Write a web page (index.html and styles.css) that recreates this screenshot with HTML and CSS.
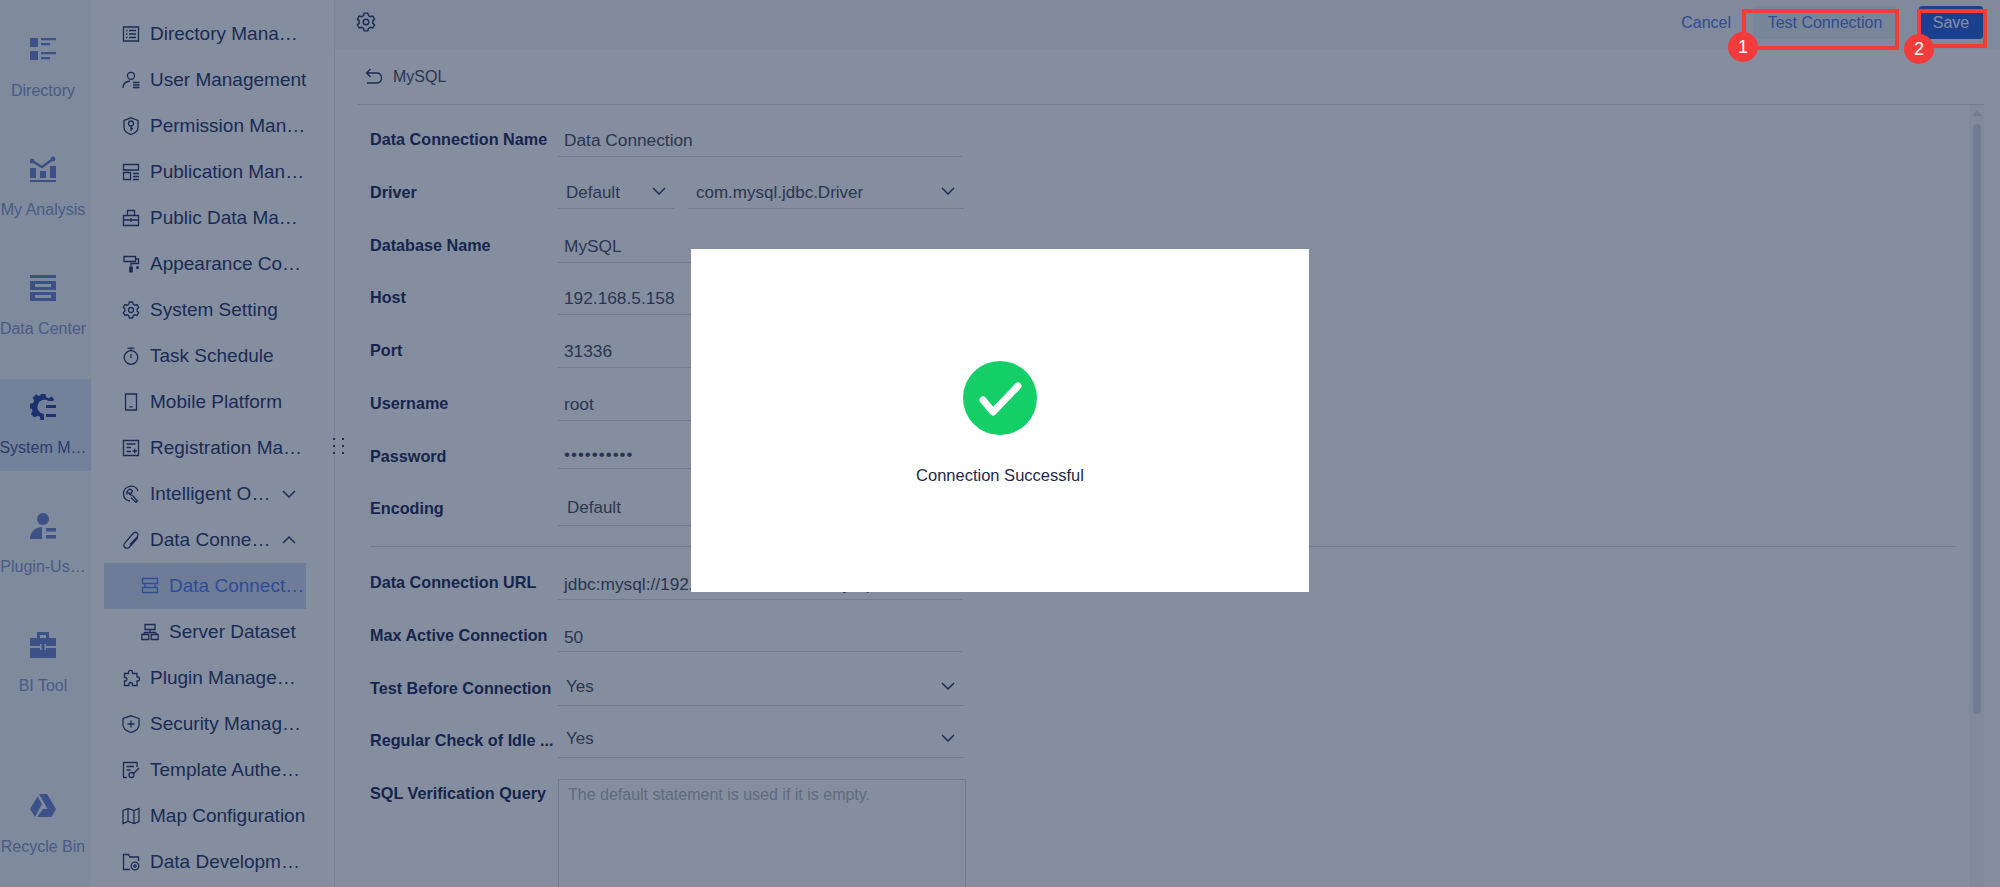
FILE: index.html
```html
<!DOCTYPE html>
<html lang="en">
<head>
<meta charset="utf-8">
<title>Data Connection</title>
<link rel="stylesheet" href="styles.css">
</head>
<body>
<div class="app">

  <nav class="rail">
    <a class="rail-item">
      <svg viewBox="0 0 26 26"><path d="M0 1h8v9H0zM0 14h8v9H0zM11 1h15v2.2H11zM11 6h9v2.2h-9zM11 15h15v2.2H11zM11 20h9v2.2h-9z"/></svg>
      <span>Directory</span>
    </a>
    <a class="rail-item">
      <svg viewBox="0 0 26 26"><path d="M0 12h6v10H0zM10 15h6v7h-6zM20 10h6v12h-6zM0 24h26v2H0z"/><path class="trend" d="M2 5l10 6 11-8"/><circle cx="2" cy="5" r="2.4"/><circle cx="23" cy="3" r="2.4"/></svg>
      <span>My Analysis</span>
    </a>
    <a class="rail-item">
      <svg viewBox="0 0 26 26"><path d="M0 0h26v3H0z"/><path fill-rule="evenodd" d="M0 6h26v9H0zM5 9v3h16V9zM0 17h26v9H0zM5 20v3h16v-3z"/></svg>
      <span>Data Center</span>
    </a>
    <a class="rail-item active">
      <svg viewBox="0 0 26 26"><path fill-rule="evenodd" d="M10.5 0h5l.7 3.2 2.6 1.1 2.8-1.7 2.6 2.9-1.2 1.6h-4.2A7.2 7.2 0 1 0 14 20.1V26h-3.5l-.7-3.2-2.6-1.1-2.8 1.7-3.500-3.500 1.700-2.800-1.100-2.600L0 14.800v-5l3.200-.7 1.100-2.600-1.700-2.800 3.500-3.500 2.800 1.700 1.900-.8z"/><path d="M16 11h10v3H16zM16 20h10v3H16z"/></svg>
      <span>System M…</span>
    </a>
    <a class="rail-item">
      <svg viewBox="0 0 26 26"><circle cx="13" cy="6" r="6"/><path d="M0 26c0-7 5-12 12-12v12zM16 15h10v3.500H16zM16 22h10v3.500H16z"/></svg>
      <span>Plugin-Us…</span>
    </a>
    <a class="rail-item">
      <svg viewBox="0 0 26 26"><path fill-rule="evenodd" d="M7 0h12v6h7v8h-10v-2h-6v2H0V6h7zM10 3v3h6V3zM0 16h10v2h6v-2h10v10H0z"/><path d="M11.500 12h3v6h-3z"/></svg>
      <span>BI Tool</span>
    </a>
    <a class="rail-item bottom">
      <svg viewBox="0 0 26 26"><path d="M9 0h8l9 15h-8.500zM7.500 2.500l4.500 7.500L5 23 0 15zM13 15h13l-4.500 8H7z"/></svg>
      <span>Recycle Bin</span>
    </a>
  </nav>

  <aside class="sidebar">
    <a class="nav-item">
      <svg viewBox="0 0 18 18"><path d="M1.500 2h15v14h-15zM4 5.500h1.500M7 5.500h7M4 9h1.500M7 9h7M4 12.500h1.500M7 12.500h7"/></svg>
      Directory Mana…
    </a>
    <a class="nav-item">
      <svg viewBox="0 0 18 18"><circle cx="9" cy="4.800" r="3.500"/><path d="M1 17c0-3.500 2.500-6.500 7-7M11 11.500h6.500M11 14h6.500M11 16.500h6.500"/></svg>
      User Management
    </a>
    <a class="nav-item">
      <svg viewBox="0 0 18 18"><path d="M9 .8l7 2.700v7c0 3.200-3 5.700-7 7-4-1.300-7-3.800-7-7v-7z"/><circle cx="9" cy="6.500" r="2.500"/><path d="M9 9v5M9 11.500h2"/></svg>
      Permission Man…
    </a>
    <a class="nav-item">
      <svg viewBox="0 0 18 18"><path d="M1.500 1.500h15V7h-15zM1.500 9.500h7v7h-7zM11 10.500h6M11 13.500h6M11 16.500h6"/></svg>
      Publication Man…
    </a>
    <a class="nav-item">
      <svg viewBox="0 0 18 18"><path d="M1.500 6.500h15v10h-15zM5.500 6.500v-5h7v5M1.500 11h15M9 9v4"/></svg>
      Public Data Ma…
    </a>
    <a class="nav-item">
      <svg viewBox="0 0 18 18"><path d="M2 1.500h11.500v5H2zM13.500 4h3v4.500H9v3"/><path class="solid" d="M7.200 11.500h3.600v6H7.200z"/><circle class="solid" cx="15.500" cy="12.500" r="1.500"/></svg>
      Appearance Co…
    </a>
    <a class="nav-item">
      <svg viewBox="0 0 18 18"><path d="M7.400 1h3.200l.6 2.200 1.700 1 2.200-.6 1.600 2.800-1.600 1.600v2l1.600 1.600-1.600 2.800-2.200-.6-1.700 1-.6 2.200H7.400l-.6-2.200-1.700-1-2.200.6-1.600-2.800L2.900 10V8L1.300 6.400l1.600-2.800 2.200.6 1.700-1z"/><circle cx="9" cy="9" r="2.500"/></svg>
      System Setting
    </a>
    <a class="nav-item">
      <svg viewBox="0 0 18 18"><circle cx="9" cy="10.500" r="6.800"/><path d="M5.500 1.200h7M9 1.200v2.500M9 7v4"/></svg>
      Task Schedule
    </a>
    <a class="nav-item">
      <svg viewBox="0 0 18 18"><path d="M3.500 1h11v16h-11zM7.500 13.800h3"/></svg>
      Mobile Platform
    </a>
    <a class="nav-item">
      <svg viewBox="0 0 18 18"><path d="M1.500 1.500h15v15h-15zM4.500 5h9M4.500 8.500h4.500M4.500 12.500h4.500M10.500 12h4.500M12.700 9.800v4.500"/></svg>
      Registration Ma…
    </a>
    <a class="nav-item has-arrow">
      <svg viewBox="0 0 18 18"><path d="M16 6A7.500 7.500 0 0 0 1.500 8.500C1.500 12.500 4 15.500 8 16"/><path d="M5 9.500a5 5 0 0 1 3-5.500l2.500 2-1.500 2.500-2.500-.5 1.500 1.500 2.500 1 5 5.500-1.500 1.500-5-5"/></svg>
      Intelligent O…
      <svg class="arrow" viewBox="0 0 14 14"><path d="M1 4l6 6 6-6"/></svg>
    </a>
    <a class="nav-item has-arrow">
      <svg viewBox="0 0 18 18"><path d="M16 6.500L7.500 16c-1.200 1.300-3.500 1.700-4.700.5-1.200-1.200-1-3.300.2-4.700L11 2.500c1.200-1.300 3-1.500 4.200-.5 1.200 1 1 2.800 0 4L8 13.500"/></svg>
      Data Conne…
      <svg class="arrow" viewBox="0 0 14 14"><path d="M1 10l6-6 6 6"/></svg>
    </a>
    <a class="nav-item sub current">
      <svg viewBox="0 0 18 18"><path d="M1.500 1.500h15v5h-15zM4 6.500v4M1.500 10.500h15v5h-15zM14 6.500v4" /></svg>
      Data Connect…
    </a>
    <a class="nav-item sub">
      <svg viewBox="0 0 18 18"><path d="M4 1.500h10v5H4zM9 6.500v3M3 9.500h12M3 9.500v2M15 9.500v2M.8 11.500h7v5h-7zM10.200 11.500h7v5h-7z"/></svg>
      Server Dataset
    </a>
    <a class="nav-item">
      <svg viewBox="0 0 18 18"><path d="M6.500 3C6.500.8 10.500.8 10.500 3v1.500H15V8h1c2 0 2 4 0 4h-1v4.500h-4.500V15c0-2-3.500-2-3.500 0v1.500H2.500V12H3.500c2 0 2-3.500 0-3.500h-1V4.500h4z"/></svg>
      Plugin Manage…
    </a>
    <a class="nav-item">
      <svg viewBox="0 0 18 18"><path d="M9 .8l8 2.700v6.500c0 3.500-3.500 6-8 7.500-4.500-1.500-8-4-8-7.500V3.500zM9 5.500v7M5.500 9h7"/></svg>
      Security Manag…
    </a>
    <a class="nav-item">
      <svg viewBox="0 0 18 18"><path d="M15 6V1.500H1.500v15H5M4.500 5.500h7.500M4.500 9h4"/><circle cx="9.500" cy="14" r="2.500"/><path d="M11.500 12.500L17 7"/></svg>
      Template Authe…
    </a>
    <a class="nav-item">
      <svg viewBox="0 0 18 18"><path d="M1 3.500L6 1.500l6 2 5-2v13l-5 2-6-2-5 2zM6 1.500v13M12 3.500v13"/></svg>
      Map Configuration
    </a>
    <a class="nav-item">
      <svg viewBox="0 0 18 18"><path d="M8 16.500H1.500V1.500h5l1.500 2.500h8.500v4"/><circle cx="13" cy="13" r="3.800"/><circle cx="13" cy="13" r="1.200"/></svg>
      Data Developm…
    </a>
    <svg class="drag-dots" viewBox="0 0 12 18"><path d="M0 0h2v2H0zM0 7h2v2H0zM0 14h2v2H0zM9 0h2v2H9zM9 7h2v2H9zM9 14h2v2H9z"/></svg>
  </aside>

  <main class="main">
    <header class="topbar">
      <svg class="gear" viewBox="0 0 18 18"><path d="M7.400 1h3.200l.6 2.200 1.700 1 2.200-.6 1.600 2.800-1.600 1.600v2l1.600 1.600-1.600 2.800-2.200-.6-1.700 1-.6 2.200H7.400l-.6-2.200-1.700-1-2.200.6-1.600-2.800L2.900 10V8L1.300 6.400l1.600-2.800 2.200.6 1.700-1z"/><circle cx="9" cy="9" r="2.500"/></svg>
      <div class="actions">
        <a class="link-btn">Cancel</a>
        <a class="test-btn">Test Connection</a>
        <a class="save-btn">Save</a>
      </div>
    </header>

    <div class="body">
      <div class="crumb">
        <svg viewBox="0 0 18 18"><path d="M5.500 1L1.500 5l4 4M1.500 5h10c3 0 5 2 5 5s-2 5-5 5H2"/></svg>
        MySQL
      </div>
      <div class="scroller">
        <form class="form">
          <div class="row"><label>Data Connection Name</label><div class="field tall">Data Connection</div></div>
          <div class="row"><label>Driver</label>
            <div class="split">
              <div class="field select short">Default<svg viewBox="0 0 14 14"><path d="M1 4l6 6 6-6"/></svg></div>
              <div class="field select grow">com.mysql.jdbc.Driver<svg viewBox="0 0 14 14"><path d="M1 4l6 6 6-6"/></svg></div>
            </div>
          </div>
          <div class="row"><label>Database Name</label><div class="field tall">MySQL</div></div>
          <div class="row"><label>Host</label><div class="field tall">192.168.5.158</div></div>
          <div class="row"><label>Port</label><div class="field tall">31336</div></div>
          <div class="row"><label>Username</label><div class="field tall">root</div></div>
          <div class="row"><label>Password</label><div class="field dots">••••••••••</div></div>
          <div class="row"><label>Encoding</label><div class="field tall select-text">Default</div></div>

          <hr class="divider">

          <div class="row lower"><label>Data Connection URL</label><div class="field">jdbc:mysql://192.168.5.158:31336/mysql</div></div>
          <div class="row lower"><label>Max Active Connection</label><div class="field">50</div></div>
          <div class="row lower"><label>Test Before Connection</label><div class="field select wide">Yes<svg viewBox="0 0 14 14"><path d="M1 4l6 6 6-6"/></svg></div></div>
          <div class="row lower"><label>Regular Check of Idle ...</label><div class="field select wide">Yes<svg viewBox="0 0 14 14"><path d="M1 4l6 6 6-6"/></svg></div></div>
          <div class="row lower textarea-row"><label>SQL Verification Query</label><div class="textarea">The default statement is used if it is empty.</div></div>
        </form>
        <div class="scrollbar">
          <i class="scroll-up"></i>
          <i class="scroll-thumb"></i>
        </div>
      </div>
    </div>
  </main>
</div>

<div class="overlay">
  <div class="modal">
    <svg class="ok" viewBox="0 0 74 74"><circle cx="37" cy="37" r="37"/><path d="M20 39l10 12 25-26"/></svg>
    <p>Connection Successful</p>
  </div>
</div>

<div class="mark box-test"></div>
<div class="mark box-save"></div>
<div class="badge badge-test">1</div>
<div class="badge badge-save">2</div>
</body>
</html>
```

FILE: styles.css
```css
* {box-sizing: border-box;}
html,body {margin: 0;height: 100%;overflow: hidden;}
body {font-family: "Liberation Sans", Arial, sans-serif;background: #fff;color: #2a386c;}

.app {display: flex;height: 887px;}

/* left icon rail */
.rail {width: 91px;flex: none;background: #f3f6fc;display: flex;flex-direction: column;gap: 27px;padding: 22px 0 15px;}
.rail-item {height: 92px;display: flex;flex-direction: column;align-items: center;padding: 15px 5px 0 0;color: #8798cc;font-size: 16px;white-space: nowrap;}
.rail-item svg {width: 26px;height: 26px;flex: none;fill: #6c85d0;margin-bottom: 18.500px;}
.rail-item span {line-height: 18px;}
.rail-item .trend {fill: none;stroke: #6c85d0;stroke-width: 2.5;}
.rail-item.active {background: #dde4f6;color: #465a96;}
.rail-item.active svg {fill: #2c44a2;}
.rail-item.bottom {margin-top: auto;padding-top: 14px;}
.rail-item.bottom svg {margin-bottom: 18px;}

/* second level menu */
.sidebar {width: 244px;flex: none;background: #fff;border-right: 1px solid #e8ecf2;padding: 11px 0 0 13px;position: relative;}
.nav-item {width: 202px;height: 46px;display: flex;align-items: center;gap: 10px;padding-left: 18px;font-size: 19px;white-space: nowrap;color: #2a386c;}
.nav-item svg {width: 18px;height: 18px;flex: none;fill: none;stroke: currentColor;stroke-width: 1.300;}
.nav-item svg .solid {fill: currentColor;stroke: none;}
.nav-item .arrow {width: 14px;height: 14px;margin-left: auto;margin-right: 10px;stroke-width: 1.500;}
.nav-item.sub {padding-left: 37px;}
.nav-item.current {background: #d0daf2;color: #4c7cf0;}
.drag-dots {position: absolute;left: 242px;top: 438px;width: 12px;height: 18px;fill: #2a386c;}

/* right part */
.main {flex: 1;min-width: 0;display: flex;flex-direction: column;}
.topbar {height: 50px;flex: none;background: #f4f7fa;display: flex;justify-content: space-between;padding: 6px 17px 0 21px;}
.gear {width: 20px;height: 20px;margin-top: 6px;fill: none;stroke: #2a386c;stroke-width: 1.300;}
.actions {display: flex;align-items: flex-start;gap: 22px;font-size: 16px;}
.link-btn {line-height: 33px;color: #5478e8;}
.test-btn {width: 144px;height: 33px;line-height: 33px;text-align: center;background: #e6ecf5;color: #5478e8;border-radius: 2px;}
.save-btn {width: 64px;height: 33px;line-height: 33px;text-align: center;background: #2c62e2;color: #fff;border-radius: 3px;}

.body {flex: 1;min-height: 0;display: flex;flex-direction: column;padding: 0 16px 0 22px;}
.crumb {height: 55px;flex: none;display: flex;align-items: center;gap: 10px;padding-left: 8px;border-bottom: 1px solid #d4dae2;font-size: 16px;color: #4a4e66;}
.crumb svg {width: 18px;height: 18px;fill: none;stroke: #2a386c;stroke-width: 1.300;}
.scroller {flex: 1;min-height: 0;display: flex;}
.form {flex: 1;min-width: 0;padding: 9px 13px 0 13px;overflow: hidden;}
.scrollbar {width: 15px;flex: none;background: #f4f6f8;display: flex;flex-direction: column;align-items: center;padding-top: 5px;}
.scroll-up {width: 0;height: 0;border-left: 5px solid transparent;border-right: 5px solid transparent;border-bottom: 6px solid #d8dce2;}
.scroll-thumb {width: 8px;height: 590px;margin-top: 8px;background: #d4dae4;border-radius: 4px;}

.row {display: flex;height: 52.750px;align-items: flex-start;}
.row label {width: 188px;flex: none;font-size: 16.200px;font-weight: bold;line-height: 18px;padding-top: 16px;color: #1e2c5c;white-space: nowrap;}
.row.lower label {padding-top: 15px;}
.field {width: 404px;height: 41.500px;padding: 17px 0 0 6px;font-size: 17.300px;line-height: 18px;color: #4a4e66;border-bottom: 1px solid #d4dae2;white-space: nowrap;overflow: hidden;}
.field.tall {height: 43px;}
.field.dots {height: 38.500px;padding-top: 15px;font-size: 17px;letter-spacing: 1px;}
.field.select-text {padding-left: 9px;padding-top: 16px;font-size: 17px;}
.split {display: flex;gap: 13px;}
.select {display: flex;justify-content: space-between;align-items: flex-start;padding: 17px 9px 0 8px;height: 42px;font-size: 17px;}
.select svg {width: 14px;height: 14px;margin-top: 0;fill: none;stroke: #2a386c;stroke-width: 1.500;}
.select.short {width: 117px;padding-right: 9px;}
.select.grow {width: 276px;padding-right: 9px;}
.select.wide {width: 406px;padding-top: 14px;}
.select.wide svg {margin-top: 1px;}
.divider {height: 1px;border: 0;background: #d4dae2;margin: 10px 0 11px;}
.textarea-row {height: 200px;}
.textarea {width: 408px;height: 180px;margin-top: 10px;padding: 5px 9px;border: 1px solid #d4dae2;font-size: 16px;line-height: 20px;color: #b2b8c2;white-space: nowrap;}

/* dialog */
.overlay {position: fixed;inset: 0;z-index: 1;background: rgba(11,29,62,.5);display: flex;align-items: center;justify-content: center;padding-bottom: 46px;}
.modal {width: 618px;height: 343px;background: #fff;display: flex;flex-direction: column;align-items: center;justify-content: center;padding-top: 3px;}
.ok {width: 74px;height: 74px;}
.ok circle {fill: #14ce68;}
.ok path {fill: none;stroke: #fff;stroke-width: 7;stroke-linecap: round;stroke-linejoin: round;}
.modal p {margin: 31px 0 0;font-size: 16.500px;line-height: 18px;color: #1e2a4a;}

/* red tutorial marks on top of the screenshot */
.mark {position: fixed;z-index: 2;border: 4px solid #f33b3b;top: 9px;}
.box-test {left: 1742px;width: 157px;height: 41px;}
.box-save {left: 1917px;width: 70px;height: 39px;}
.badge {position: fixed;z-index: 3;width: 30px;height: 30px;line-height: 30px;text-align: center;border-radius: 50%;background: #f33b3b;color: #fff;font-size: 18px;}
.badge-test {left: 1728px;top: 32px;}
.badge-save {left: 1904px;top: 34px;}
```
